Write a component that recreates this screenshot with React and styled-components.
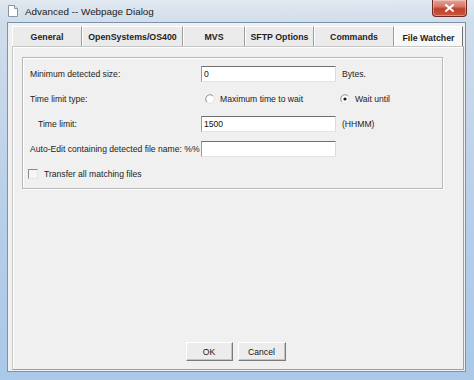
import React from "react";
import styled, { createGlobalStyle } from "styled-components";

const Global = createGlobalStyle`
  html, body { margin: 0; padding: 0; background: #ffffff; }
  body { font-family: "Liberation Sans", Arial, sans-serif; }
  * { box-sizing: border-box; }
`;

const Window = styled.div`
  width: 474px;
  height: 380px;
  display: flex;
  flex-direction: column;
  padding: 0 8px 8px 7px;
  background:
    linear-gradient(180deg, rgba(226,233,241,0.95) 0px, rgba(208,221,235,0.9) 22px, rgba(180,205,232,0.9) 60%, rgba(170,200,232,1) 100%),
    linear-gradient(90deg, #c9d8e8 0%, #d9e3ee 40%, #c5d6e9 100%);
  overflow: hidden;
`;

const TitleBar = styled.div`
  height: 22px;
  display: flex;
  align-items: center;
  position: relative;
  padding-left: 1px;
  gap: 7px;
`;

const TitleText = styled.span`
  font-family: "Liberation Sans", Arial, sans-serif;
  font-size: 9.9px;
  color: #1b1b1b;
  margin-top: 1px;
`;

const CloseButton = styled.div`
  position: absolute;
  top: 0;
  right: -1px;
  width: 35px;
  height: 17px;
  border: 1px solid #6d2a24;
  border-top: none;
  border-radius: 0 0 4px 4px;
  background: linear-gradient(180deg, #e6a195 0%, #d6786a 40%, #c0402e 55%, #c9553e 100%);
  box-shadow: inset 0 0 0 1px rgba(255,255,255,0.35);
  display: flex;
  align-items: center;
  justify-content: center;
`;

const Client = styled.div`
  height: 350px;
  border: 1px solid #7d92ab;
  background: #f0f0f0;
  display: flex;
  flex-direction: column;
  padding: 3px 1px 1px 4px;
`;

const TabStrip = styled.div`
  display: flex;
  height: 20px;
  margin-right: 1px;
`;

const Tab = styled.div`
  width: ${p => p.$w}px;
  height: 20px;
  background: ${p => (p.$active ? "#f8f8f8" : "#ebebeb")};
  border-top: 1px solid #ffffff;
  border-left: 1px solid #ffffff;
  border-right: 1px solid ${p => (p.$active ? "#6e6e6e" : "#9c9c9c")};
  display: flex;
  align-items: center;
  justify-content: center;
  font-weight: bold;
  font-size: 8.8px;
  color: #1e1e1e;
  padding-top: ${p => (p.$active ? 2 : 0)}px;
  white-space: nowrap;
`;

const Pane = styled.div`
  flex: 1;
  border: 1px solid #c6c6c6;
  border-right-color: #a0a0a0;
  border-bottom-color: #a0a0a0;
  box-shadow: inset 1px 1px 0 #ffffff;
  display: flex;
  flex-direction: column;
  padding: 10px 20px 8px 9px;
`;

const Group = styled.div`
  border: 1px solid #b8b8b8;
  box-shadow: inset 1px 1px 0 #ffffff, 1px 1px 0 #ffffff;
  display: flex;
  flex-direction: column;
  gap: 9px;
  padding: 8px 7px 6px 7px;
`;

const Row = styled.div`
  height: 16px;
  display: flex;
  align-items: center;
  font-size: 8.6px;
  color: #1c1c1c;
  margin-left: ${p => p.$indent || 0}px;
`;

const Label = styled.span`
  width: ${p => 171 - (p.$indent || 0)}px;
  flex: none;
  white-space: nowrap;
`;

const TextInput = styled.div`
  width: 135px;
  height: 16px;
  background: #ffffff;
  border-top: 1px solid #6f6f6f;
  border-left: 1px solid #9a9a9a;
  border-right: 1px solid #dcdcdc;
  border-bottom: 1px solid #e4e4e4;
  display: flex;
  align-items: center;
  padding-left: 2px;
  font-size: 8.6px;
  color: #111;
  flex: none;
`;

const Suffix = styled.span`
  margin-left: 6px;
`;

const RadioOption = styled.label`
  display: flex;
  align-items: center;
  gap: 5px;
  width: ${p => p.$w}px;
  padding-left: ${p => p.$pl || 0}px;
  flex: none;
`;

const CheckBox = styled.span`
  width: 10px;
  height: 10px;
  flex: none;
  background: #f6f6f6;
  border-top: 1px solid #8a8a8a;
  border-left: 1px solid #8a8a8a;
  border-right: 1px solid #e6e6e6;
  border-bottom: 1px solid #e6e6e6;
  margin-right: 6px;
`;

const Spacer = styled.div`
  flex: 1;
`;

const ButtonRow = styled.div`
  display: flex;
  justify-content: center;
  gap: 5px;
  padding-left: 6px;
`;

const Button = styled.div`
  width: ${p => p.$w}px;
  height: 19px;
  background: #ececec;
  border-top: 1px solid #ffffff;
  border-left: 1px solid #ffffff;
  border-right: 1px solid #7a7a7a;
  border-bottom: 1px solid #7a7a7a;
  box-shadow: inset -1px -1px 0 #c4c4c4;
  display: flex;
  align-items: center;
  justify-content: center;
  font-size: 8.6px;
  color: #151515;
`;

const Radio = ({ checked }) => (
  <svg width="10" height="10" viewBox="0 0 10 10">
    <circle cx="5" cy="5" r="4.2" fill="#ffffff" />
    <path d="M8 2 A4.2 4.2 0 0 0 2 8" stroke="#8c8c8c" strokeWidth="1" fill="none" />
    <path d="M2 8 A4.2 4.2 0 0 0 8 2" stroke="#e2e2e2" strokeWidth="1" fill="none" />
    {checked && <circle cx="5" cy="5" r="1.6" fill="#1a1a1a" />}
  </svg>
);

const DocIcon = () => (
  <svg width="10" height="12" viewBox="0 0 10 12">
    <path d="M0.5 0.5 H6.5 L9.5 3.5 V11.5 H0.5 Z" fill="#ffffff" stroke="#8a96a6" strokeWidth="1" />
    <path d="M6.5 0.5 V3.5 H9.5" fill="#e3e8ee" stroke="#8a96a6" strokeWidth="1" />
  </svg>
);

const CloseX = () => (
  <svg width="9" height="8" viewBox="0 0 9 8">
    <path d="M1 1 L8 7 M8 1 L1 7" stroke="#ffffff" strokeWidth="2" strokeLinecap="square" />
  </svg>
);

const tabs = [
  { label: "General", w: 70 },
  { label: "OpenSystems/OS400", w: 101 },
  { label: "MVS", w: 62 },
  { label: "SFTP Options", w: 69 },
  { label: "Commands", w: 80 },
  { label: "File Watcher", w: 69, active: true },
];

export default function App() {
  return (
    <>
      <Global />
      <Window>
        <TitleBar>
          <DocIcon />
          <TitleText>Advanced -- Webpage Dialog</TitleText>
          <CloseButton>
            <CloseX />
          </CloseButton>
        </TitleBar>
        <Client>
          <TabStrip>
            {tabs.map(t => (
              <Tab key={t.label} $w={t.w} $active={t.active}>
                {t.label}
              </Tab>
            ))}
          </TabStrip>
          <Pane>
            <Group>
              <Row>
                <Label>Minimum detected size:</Label>
                <TextInput>0</TextInput>
                <Suffix>Bytes.</Suffix>
              </Row>
              <Row>
                <Label>Time limit type:</Label>
                <RadioOption $w={139} $pl={4}>
                  <Radio />
                  Maximum time to wait
                </RadioOption>
                <RadioOption $w={80}>
                  <Radio checked />
                  Wait until
                </RadioOption>
              </Row>
              <Row $indent={8}>
                <Label $indent={8}>Time limit:</Label>
                <TextInput>1500</TextInput>
                <Suffix>(HHMM)</Suffix>
              </Row>
              <Row>
                <Label>Auto-Edit containing detected file name: %%</Label>
                <TextInput />
              </Row>
              <Row $indent={-2}>
                <CheckBox />
                Transfer all matching files
              </Row>
            </Group>
            <Spacer />
            <ButtonRow>
              <Button $w={47}>OK</Button>
              <Button $w={48}>Cancel</Button>
            </ButtonRow>
          </Pane>
        </Client>
      </Window>
    </>
  );
}
